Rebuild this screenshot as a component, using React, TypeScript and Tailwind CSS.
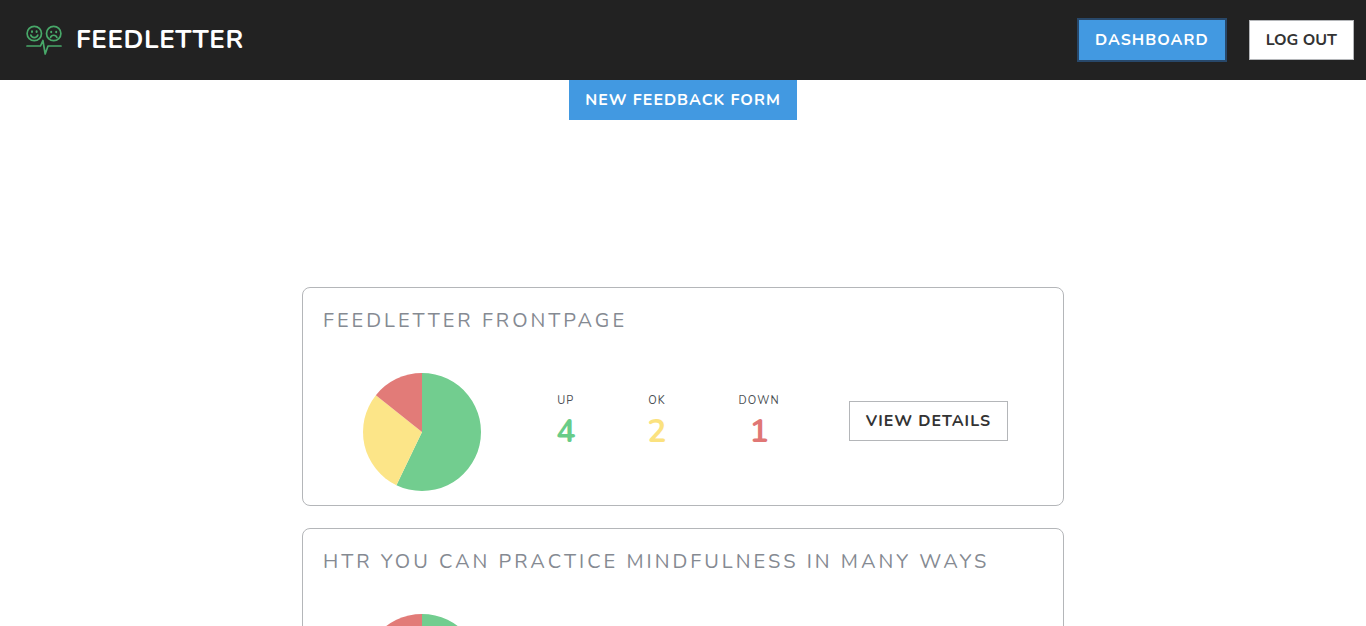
type Feedback = {
  id: number;
  title: string;
  up: number;
  ok: number;
  down: number;
};

const forms: Feedback[] = [
  { id: 1, title: "Feedletter Frontpage", up: 4, ok: 2, down: 1 },
  { id: 2, title: "HTR You can practice mindfulness in many ways", up: 4, ok: 2, down: 1 },
];

function Logo() {
  return (
    <svg
      viewBox="0 0 36 30"
      className="h-[30px] w-9"
      fill="none"
      stroke="#48a869"
      strokeWidth="1.7"
      strokeLinecap="round"
      strokeLinejoin="round"
      aria-hidden="true"
    >
      <circle cx="8.3" cy="8.5" r="7.2" />
      <circle cx="27.7" cy="8.5" r="7.2" />
      <path d="M4.8 10.100c1 3.400 6 3.400 7 0M24.500 12.500c1-3 5.400-3 6.400 0" />
      <path d="M6 6.300v.6M10.600 6.300v.6M25.200 6.700v.6M30.200 6.700v.6" strokeWidth="2" />
      <path d="M1 21h13.500l2.400-5.500 2.300 13.500 2.800-8H35" />
    </svg>
  );
}

function Pie({ up, ok, down }: { up: number; ok: number; down: number }) {
  const total = up + ok + down;
  const point = (value: number) => {
    const angle = (value / total) * Math.PI * 2;
    return `${59 + 59 * Math.sin(angle)} ${59 - 59 * Math.cos(angle)}`;
  };
  const slice = (from: number, to: number) =>
    `M59 59L${point(from)}A59 59 0 ${(to - from) / total > 0.5 ? 1 : 0} 1 ${point(to)}Z`;

  return (
    <svg viewBox="0 0 118 118" className="mt-[22px] size-[118px] shrink-0" role="img">
      <path d={slice(0, up)} fill="#72cd8f" />
      <path d={slice(up, up + ok)} fill="#fce588" />
      <path d={slice(up + ok, total)} fill="#e27b78" />
    </svg>
  );
}

function FeedbackCard({ form }: { form: Feedback }) {
  const stats = [
    { label: "Up", value: form.up, color: "text-[#68cc88]" },
    { label: "Ok", value: form.ok, color: "text-[#fbe27f]" },
    { label: "Down", value: form.down, color: "text-[#e07775]" },
  ];

  return (
    <article className="rounded-lg border border-[#b4b6b9] px-5 pt-[17px] pb-[14px]">
      <h2 className="text-xl leading-8 font-normal tracking-[3px] text-[#858a92] uppercase">
        {form.title}
      </h2>
      <div className="mt-[14px] flex items-center justify-between pr-[35px] pl-10">
        <Pie up={form.up} ok={form.ok} down={form.down} />
        <dl className="flex gap-[72px] pt-[6px] pl-[6px]">
          {stats.map((stat) => (
            <div key={stat.label} className="text-center">
              <dt className="text-[11px] leading-4 tracking-widest text-[#4b4f54] uppercase">
                {stat.label}
              </dt>
              <dd className={`text-[32px] leading-[46px] font-bold ${stat.color}`}>{stat.value}</dd>
            </div>
          ))}
        </dl>
        <button
          type="button"
          className="h-10 border border-[#b4b6b9] bg-white px-4 text-base font-bold tracking-[1px] text-[#333] uppercase"
        >
          View details
        </button>
      </div>
    </article>
  );
}

export default function App() {
  return (
    <div className="min-h-screen bg-white font-['Nunito','Lato',sans-serif]">
      <header className="flex h-20 items-center justify-between bg-[#222] pr-3 pl-[26px]">
        <a href="#home" className="flex items-center gap-[14px]">
          <Logo />
          <span className="pb-[2px] text-[26px] font-bold tracking-wide text-white uppercase">
            Feedletter
          </span>
        </a>
        <nav className="flex items-center gap-[22px]">
          <button
            type="button"
            className="h-11 border-2 border-[#28486a] bg-[#4299e1] px-4 text-base font-bold tracking-[1px] text-white uppercase"
          >
            Dashboard
          </button>
          <button
            type="button"
            className="h-10 border border-[#b4b6b9] bg-white px-4 text-base font-bold text-[#333] uppercase"
          >
            Log out
          </button>
        </nav>
      </header>
      <main className="flex flex-col items-center">
        <button
          type="button"
          className="h-10 bg-[#4299e1] px-4 text-base font-bold tracking-[1px] text-white uppercase"
        >
          New feedback form
        </button>
        <section className="mt-[167px] flex w-full max-w-[762px] flex-col gap-[22px]">
          {forms.map((form) => (
            <FeedbackCard key={form.id} form={form} />
          ))}
        </section>
      </main>
    </div>
  );
}
